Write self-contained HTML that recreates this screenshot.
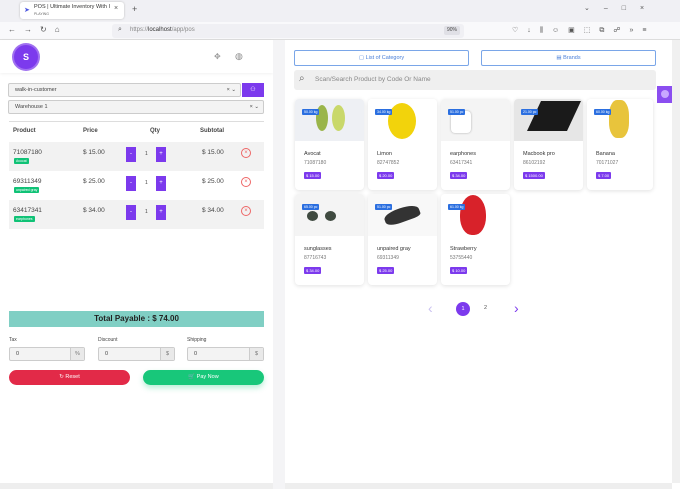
<!DOCTYPE html><html><head><style>
*{box-sizing:border-box;margin:0;padding:0}
body{width:680px;height:489px;overflow:hidden;font-family:"Liberation Sans",sans-serif;background:#fff;position:relative;font-size:6px;color:#444}
.a{position:absolute}
.card{position:absolute;width:69px;height:91px;background:#fff;border-radius:4px;box-shadow:0 1px 4px rgba(0,0,0,.12);overflow:hidden}
.card .img{height:42px;background:#f2f2f2;position:relative}
.card .tag{position:absolute;left:7px;top:10px;background:#2b6fe0;color:#fff;font-size:3.5px;padding:1px 2px;border-radius:1px}
.card .n{position:absolute;left:9px;top:52px;font-size:5.5px;color:#333}
.card .c{position:absolute;left:9px;top:61px;font-size:5px;color:#777}
.card .p{position:absolute;left:9px;top:73px;font-size:4px;background:#7c3aed;color:#fff;padding:1px 2px;border-radius:1px}
.row{position:absolute;left:9px;width:255px;height:29px;font-size:6.5px;color:#444}
.btn{position:absolute;width:10px;height:15px;background:#7c3aed;color:#fff;font-size:6px;text-align:center;line-height:15px}
.x{position:absolute;width:10px;height:10px;border:1px solid #e66;border-radius:50%;color:#e66;font-size:6px;text-align:center;line-height:8px}
.badge{position:absolute;background:#10c276;color:#fff;font-size:3.5px;padding:1px 2px;border-radius:1px}
.inp{position:absolute;height:14px;border:1px solid #ccc;border-radius:2px;background:#f3f3f3;font-size:5.5px;padding-left:6px;line-height:12px}
.inp span{position:absolute;right:0;top:0;width:14px;height:12px;border-left:1px solid #ccc;background:#e9e9e9;text-align:center;color:#777}
</style></head><body>
<!-- browser chrome -->
<div class="a" style="left:0;top:0;width:680px;height:22px;background:#f0f0f4"></div>
<div class="a" style="left:20px;top:2px;width:104px;height:17px;background:#fff;border-radius:3px;box-shadow:0 0 2px #bbb"></div>
<div class="a" style="left:24px;top:6px;color:#4a55e0;font-size:7px">➤</div>
<div class="a" style="left:34px;top:4px;font-size:5.5px;color:#333">POS | Ultimate Inventory With I</div>
<div class="a" style="left:34px;top:12px;font-size:3.5px;color:#666">PLAYING</div>
<div class="a" style="left:114px;top:5px;font-size:7px;color:#555">×</div>
<div class="a" style="left:132px;top:4px;font-size:9px;color:#555">+</div>
<div class="a" style="left:584px;top:4px;font-size:7px;color:#555;letter-spacing:14px">⌄–□×</div>
<div class="a" style="left:0;top:22px;width:680px;height:18px;background:#f9f9fb;border-bottom:1px solid #ddd"></div>
<div class="a" style="left:8px;top:25px;font-size:8px;color:#555;letter-spacing:8px">←→↻⌂</div>
<div class="a" style="left:112px;top:24px;width:352px;height:14px;background:#f0f0f4;border-radius:3px"></div>
<div class="a" style="left:118px;top:26px;font-size:7px;color:#555">⌕</div>
<div class="a" style="left:130px;top:27px;font-size:6px;color:#888">https://<b style="color:#333;font-weight:normal">localhost</b>/app/pos</div>
<div class="a" style="left:444px;top:26px;width:16px;height:9px;background:#e0e0e6;border-radius:2px;font-size:5px;text-align:center;line-height:9px">90%</div>
<div class="a" style="left:512px;top:26px;font-size:7px;color:#555;letter-spacing:9px">♡↓⫼☺▣⬚⧉☍»≡</div>
<!-- left panel -->
<div class="a" style="left:0;top:40px;width:273px;height:33px;background:#fff;box-shadow:0 1px 3px rgba(0,0,0,.06)"></div>
<div class="a" style="left:14px;top:45px;width:24px;height:24px;border-radius:50%;background:#7c3aed;color:#fff;font-weight:bold;font-size:9px;text-align:center;line-height:24px;box-shadow:0 0 0 2px #a070f0">S</div>
<div class="a" style="left:214px;top:52px;font-size:8px;color:#999">✥</div>
<div class="a" style="left:235px;top:51px;font-size:9px;color:#888">◍</div>
<div class="a" style="left:273px;top:40px;width:12px;height:449px;background:#f4f4f6"></div>
<div class="inp" style="left:8px;top:83px;width:233px;height:14px;line-height:12px;font-size:5.5px">walk-in-customer<b style="position:absolute;right:4px;font-weight:normal">× ⌄</b></div>
<div class="a" style="left:242px;top:83px;width:22px;height:14px;background:#7c3aed;color:#fff;text-align:center;line-height:14px;font-size:6px">⚇</div>
<div class="inp" style="left:8px;top:100px;width:256px;height:14px;line-height:12px">Warehouse 1<b style="position:absolute;right:4px;font-weight:normal">× ⌄</b></div>
<div class="a" style="left:9px;top:121px;width:255px;height:1px;background:#ddd"></div>
<div class="a" style="left:13px;top:128px;font-size:6px;font-weight:bold;color:#444">Product</div>
<div class="a" style="left:83px;top:128px;font-size:6px;font-weight:bold;color:#444">Price</div>
<div class="a" style="left:150px;top:128px;font-size:6px;font-weight:bold;color:#444">Qty</div>
<div class="a" style="left:200px;top:128px;font-size:6px;font-weight:bold;color:#444">Subtotal</div>
<div class="row" style="top:142px;background:#f2f2f2"><div class="a" style="left:4px;top:7px">71087180</div><div class="badge" style="left:5px;top:16px">Avocat</div><div class="a" style="left:74px;top:7px">$ 15.00</div><div class="btn" style="left:117px;top:5px">-</div><div class="a" style="left:136px;top:9px;font-size:5px">1</div><div class="btn" style="left:147px;top:5px">+</div><div class="a" style="left:193px;top:7px">$ 15.00</div><div class="x" style="left:232px;top:6px">×</div></div>
<div class="row" style="top:171px;background:#fff"><div class="a" style="left:4px;top:7px">69311349</div><div class="badge" style="left:5px;top:16px">unpaired gray</div><div class="a" style="left:74px;top:7px">$ 25.00</div><div class="btn" style="left:117px;top:5px">-</div><div class="a" style="left:136px;top:9px;font-size:5px">1</div><div class="btn" style="left:147px;top:5px">+</div><div class="a" style="left:193px;top:7px">$ 25.00</div><div class="x" style="left:232px;top:6px">×</div></div>
<div class="row" style="top:200px;background:#f2f2f2"><div class="a" style="left:4px;top:7px">63417341</div><div class="badge" style="left:5px;top:16px">earphones</div><div class="a" style="left:74px;top:7px">$ 34.00</div><div class="btn" style="left:117px;top:5px">-</div><div class="a" style="left:136px;top:9px;font-size:5px">1</div><div class="btn" style="left:147px;top:5px">+</div><div class="a" style="left:193px;top:7px">$ 34.00</div><div class="x" style="left:232px;top:6px">×</div></div>
<div class="a" style="left:9px;top:311px;width:255px;height:16px;background:#80cfc4;text-align:center;font-weight:bold;font-size:8px;line-height:16px;color:#222">Total Payable : $ 74.00</div>
<div class="a" style="left:9px;top:337px;font-size:5px">Tax</div>
<div class="a" style="left:98px;top:337px;font-size:5px">Discount</div>
<div class="a" style="left:187px;top:337px;font-size:5px">Shipping</div>
<div class="inp" style="left:9px;top:347px;width:76px">0<span>%</span></div>
<div class="inp" style="left:98px;top:347px;width:77px">0<span>$</span></div>
<div class="inp" style="left:187px;top:347px;width:77px">0<span>$</span></div>
<div class="a" style="left:9px;top:370px;width:121px;height:15px;border-radius:8px;background:#e22a48;color:#fff;font-size:5.5px;text-align:center;line-height:15px">↻ Reset</div>
<div class="a" style="left:143px;top:370px;width:121px;height:15px;border-radius:8px;background:#18c77a;color:#fff;font-size:5.5px;text-align:center;line-height:15px;box-shadow:0 3px 6px rgba(24,199,122,.3)">🛒 Pay Now</div>
<!-- right panel -->
<div class="a" style="left:294px;top:50px;width:175px;height:16px;border:1px solid #7aa6e8;border-radius:2px;text-align:center;line-height:14px;font-size:5.5px;color:#4a7fd8">▢ List of Category</div>
<div class="a" style="left:481px;top:50px;width:175px;height:16px;border:1px solid #7aa6e8;border-radius:2px;text-align:center;line-height:14px;font-size:5.5px;color:#4a7fd8">▤ Brands</div>
<div class="a" style="left:294px;top:70px;width:362px;height:20px;background:#efefef;border-radius:3px"></div>
<div class="a" style="left:299px;top:73px;font-size:10px;color:#666">⌕</div>
<div class="a" style="left:315px;top:76px;font-size:6.5px;color:#888">Scan/Search Product by Code Or Name</div>
<div class="a" style="left:657px;top:86px;width:15px;height:17px;background:#8b4ef0"></div>
<div class="a" style="left:661px;top:90px;width:8px;height:8px;border-radius:50%;background:#c9a8ff"></div>
<div class="a" style="left:672px;top:40px;width:8px;height:443px;background:#f0f0f0"></div>

<div class="card" style="left:295px;top:99px"><div class="img" style="background:#eef0f4"><div class="a" style="left:21px;top:6px;width:12px;height:26px;border-radius:50%;background:#9ab54a"></div><div class="a" style="left:37px;top:6px;width:13px;height:26px;border-radius:50%;background:#c9d86a"></div><div class="tag">50.00 kg</div></div><div class="n">Avocat</div><div class="c">71087180</div><div class="p">$ 15.00</div></div>
<div class="card" style="left:368px;top:99px"><div class="img" style="background:#fff"><div class="a" style="left:20px;top:4px;width:28px;height:36px;border-radius:50%;background:#f2d30c"></div><div class="tag">34.00 kg</div></div><div class="n">Limon</div><div class="c">82747852</div><div class="p">$ 20.00</div></div>
<div class="card" style="left:441px;top:99px"><div class="img" style="background:#f4f4f4"><div class="a" style="left:10px;top:12px;width:20px;height:22px;background:#fff;border-radius:4px;box-shadow:0 0 2px #aaa"></div><div class="tag">51.00 pc</div></div><div class="n">earphones</div><div class="c">63417341</div><div class="p">$ 34.00</div></div>
<div class="card" style="left:514px;top:99px"><div class="img" style="background:#e6e6e6"><div class="a" style="left:20px;top:2px;width:40px;height:30px;background:#1a1a1a;transform:skewX(-25deg)"></div><div class="tag">21.00 pc</div></div><div class="n">Macbook pro</div><div class="c">86102192</div><div class="p">$ 1500.00</div></div>
<div class="card" style="left:587px;top:99px;width:66px"><div class="img" style="background:#fff"><div class="a" style="left:22px;top:1px;width:20px;height:38px;border-radius:40%;background:#e8c43c"></div><div class="tag">60.00 kg</div></div><div class="n">Banana</div><div class="c">70171027</div><div class="p">$ 7.00</div></div>
<div class="card" style="left:295px;top:194px"><div class="img" style="background:#f4f4f4"><div class="a" style="left:12px;top:17px;width:11px;height:10px;border-radius:50%;background:#3f4a40"></div><div class="a" style="left:30px;top:17px;width:11px;height:10px;border-radius:50%;background:#3f4a40"></div><div class="tag">65.00 pc</div></div><div class="n">sunglasses</div><div class="c">87716743</div><div class="p">$ 34.00</div></div>
<div class="card" style="left:368px;top:194px"><div class="img" style="background:#f8f8f8"><div class="a" style="left:16px;top:14px;width:36px;height:14px;border-radius:40% 50% 20% 40%;background:#333;transform:rotate(-20deg)"></div><div class="tag">51.00 pc</div></div><div class="n">unpaired gray</div><div class="c">69311349</div><div class="p">$ 25.00</div></div>
<div class="card" style="left:441px;top:194px"><div class="img" style="background:#fff"><div class="a" style="left:19px;top:1px;width:26px;height:40px;border-radius:50% 50% 45% 45%;background:#d8222a"></div><div class="tag">61.00 kg</div></div><div class="n">Strawberry</div><div class="c">53755440</div><div class="p">$ 10.00</div></div>

<div class="a" style="left:428px;top:300px;font-size:14px;color:#c9c0f0">‹</div>
<div class="a" style="left:456px;top:302px;width:14px;height:14px;border-radius:50%;background:#7c3aed;color:#fff;font-size:5.5px;text-align:center;line-height:14px">1</div>
<div class="a" style="left:484px;top:305px;font-size:5.5px;color:#555">2</div>
<div class="a" style="left:514px;top:300px;font-size:14px;color:#7c3aed">›</div>
<div class="a" style="left:285px;top:483px;width:387px;height:6px;background:#eee"></div>
<div class="a" style="left:0;top:483px;width:273px;height:6px;background:#eee"></div>
</body></html>
